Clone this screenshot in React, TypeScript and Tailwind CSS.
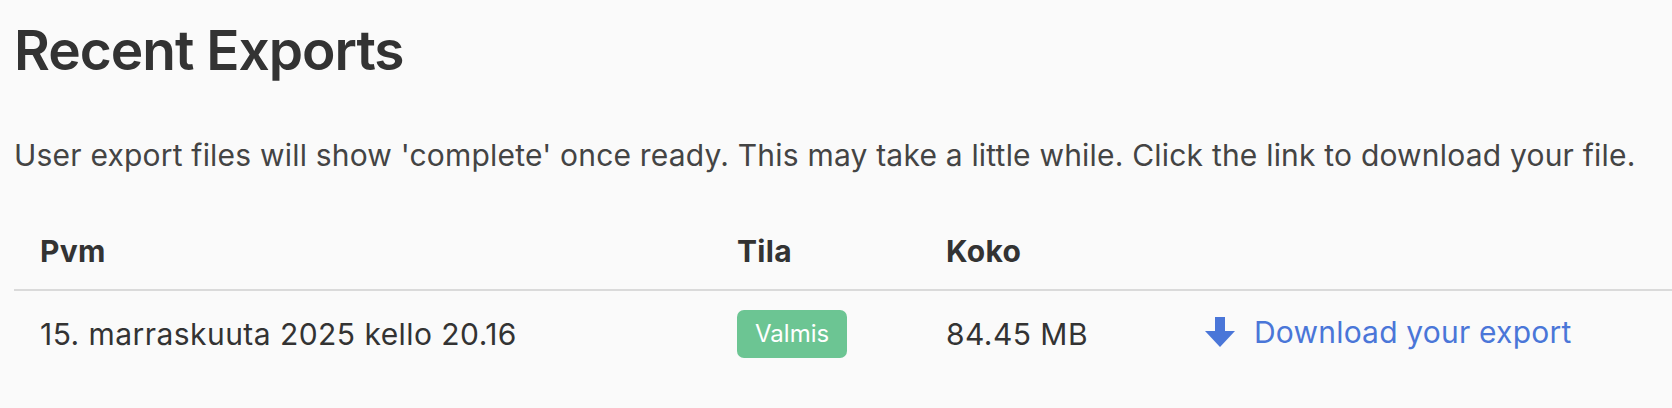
import React from "react";

const font = { fontFamily: "Inter, 'Noto Sans', sans-serif" };

function ArrowDown() {
  return (
    <svg width="30" height="30" viewBox="0 0 30 30" className="shrink-0" aria-hidden>
      <rect x="10" y="0" width="10" height="15" fill="#4a76d8" />
      <polygon points="0,14 30,14 15,30" fill="#4a76d8" strokeLinejoin="round" />
    </svg>
  );
}

const exportsList = [
  {
    date: "15. marraskuuta 2025 kello 20.16",
    status: "Valmis",
    size: "84.45 MB",
  },
];

export default function App() {
  return (
    <div className="min-h-[408px] bg-[#fafafa] text-[#333] pl-[14px] pt-[17px]" style={font}>
      <h1 className="text-[55px] leading-[66px] font-semibold tracking-[-1px]">Recent Exports</h1>
      <p className="mt-[52px] text-[30px] leading-[40px] tracking-[0.2px] text-[#444]">
        User export files will show 'complete' once ready. This may take a little while. Click the link to download your file.
      </p>

      <div className="mt-[38px] w-full">
        <div className="grid grid-cols-[697px_209px_259px_1fr] border-b-2 border-[#dadada] text-[30px] leading-[40px] font-bold tracking-[0.3px]">
          <div className="px-[26px] py-[18px]">Pvm</div>
          <div className="px-[26px] py-[18px]">Tila</div>
          <div className="px-[26px] py-[18px]">Koko</div>
          <div className="px-[26px] py-[18px]"></div>
        </div>
        {exportsList.map((e) => (
          <div
            key={e.date}
            className="grid grid-cols-[697px_209px_259px_1fr] items-center text-[30px] leading-[40px] tracking-[0.45px] py-[19px]"
          >
            <div className="px-[26px]">{e.date}</div>
            <div className="px-[26px]">
              <span className="inline-flex items-center h-[48px] px-[18px] rounded-[7px] bg-[#6cc593] text-white text-[24px] tracking-normal">
                {e.status}
              </span>
            </div>
            <div className="px-[26px]">{e.size}</div>
            <div className="px-[26px]">
              <a href="#" className="inline-flex items-center gap-[19px] text-[#4a76d8] tracking-[0.2px]">
                <ArrowDown />
                Download your export
              </a>
            </div>
          </div>
        ))}
      </div>
    </div>
  );
}
